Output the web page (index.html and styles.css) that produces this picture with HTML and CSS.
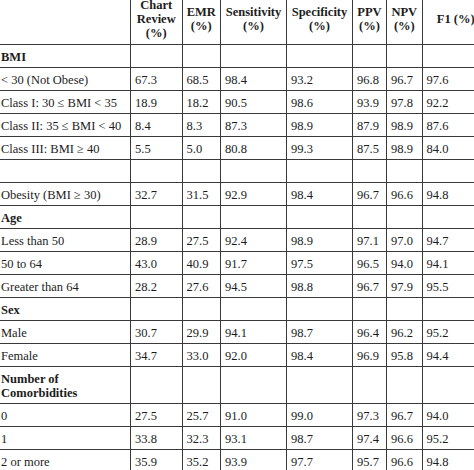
FILE: index.html
```html
<!DOCTYPE html>
<html lang="en">
<head>
<meta charset="utf-8">
<title>Table</title>
<link rel="stylesheet" href="styles.css">
</head>
<body>
<table class="tbl">
  <colgroup>
    <col class="c-label">
    <col class="c-chart">
    <col class="c-emr">
    <col class="c-sens">
    <col class="c-spec">
    <col class="c-ppv">
    <col class="c-npv">
    <col class="c-f1">
  </colgroup>
  <thead>
    <tr>
      <th></th>
      <th>Chart<br>Review<br>(%)</th>
      <th>EMR<br>(%)</th>
      <th>Sensitivity<br>(%)</th>
      <th>Specificity<br>(%)</th>
      <th>PPV<br>(%)</th>
      <th>NPV<br>(%)</th>
      <th>F1 (%)</th>
    </tr>
  </thead>
  <tbody>
    <tr class="group"><td>BMI</td><td></td><td></td><td></td><td></td><td></td><td></td><td></td></tr>
    <tr><td>&lt; 30 (Not Obese)</td><td>67.3</td><td>68.5</td><td>98.4</td><td>93.2</td><td>96.8</td><td>96.7</td><td>97.6</td></tr>
    <tr><td>Class I: 30 ≤ BMI &lt; 35</td><td>18.9</td><td>18.2</td><td>90.5</td><td>98.6</td><td>93.9</td><td>97.8</td><td>92.2</td></tr>
    <tr><td>Class II: 35 ≤ BMI &lt; 40</td><td>8.4</td><td>8.3</td><td>87.3</td><td>98.9</td><td>87.9</td><td>98.9</td><td>87.6</td></tr>
    <tr><td>Class III: BMI ≥ 40</td><td>5.5</td><td>5.0</td><td>80.8</td><td>99.3</td><td>87.5</td><td>98.9</td><td>84.0</td></tr>
    <tr><td></td><td></td><td></td><td></td><td></td><td></td><td></td><td></td></tr>
    <tr><td>Obesity (BMI ≥ 30)</td><td>32.7</td><td>31.5</td><td>92.9</td><td>98.4</td><td>96.7</td><td>96.6</td><td>94.8</td></tr>
    <tr class="group"><td>Age</td><td></td><td></td><td></td><td></td><td></td><td></td><td></td></tr>
    <tr><td>Less than 50</td><td>28.9</td><td>27.5</td><td>92.4</td><td>98.9</td><td>97.1</td><td>97.0</td><td>94.7</td></tr>
    <tr><td>50 to 64</td><td>43.0</td><td>40.9</td><td>91.7</td><td>97.5</td><td>96.5</td><td>94.0</td><td>94.1</td></tr>
    <tr><td>Greater than 64</td><td>28.2</td><td>27.6</td><td>94.5</td><td>98.8</td><td>96.7</td><td>97.9</td><td>95.5</td></tr>
    <tr class="group"><td>Sex</td><td></td><td></td><td></td><td></td><td></td><td></td><td></td></tr>
    <tr><td>Male</td><td>30.7</td><td>29.9</td><td>94.1</td><td>98.7</td><td>96.4</td><td>96.2</td><td>95.2</td></tr>
    <tr><td>Female</td><td>34.7</td><td>33.0</td><td>92.0</td><td>98.4</td><td>96.9</td><td>95.8</td><td>94.4</td></tr>
    <tr class="group"><td>Number of<br>Comorbidities</td><td></td><td></td><td></td><td></td><td></td><td></td><td></td></tr>
    <tr><td>0</td><td>27.5</td><td>25.7</td><td>91.0</td><td>99.0</td><td>97.3</td><td>96.7</td><td>94.0</td></tr>
    <tr><td>1</td><td>33.8</td><td>32.3</td><td>93.1</td><td>98.7</td><td>97.4</td><td>96.6</td><td>95.2</td></tr>
    <tr><td>2 or more</td><td>35.9</td><td>35.2</td><td>93.9</td><td>97.7</td><td>95.7</td><td>96.6</td><td>94.8</td></tr>
  </tbody>
</table>
</body>
</html>
```
FILE: styles.css
```css
html, body {
  margin: 0;
  padding: 0;
  overflow: hidden;
  background: #ffffff;
}

body {
  width: 474px;
  height: 470px;
  font-family: "Liberation Serif", "Times New Roman", serif;
  font-size: 12.5px;
  color: #1c1c1c;
}

.tbl {
  border-collapse: collapse;
  table-layout: fixed;
  width: 493px;
  margin-left: -4px;
  margin-top: -7px;
}

.c-label { width: 134px; }
.c-chart { width: 51.5px; }
.c-emr { width: 38.5px; }
.c-sens { width: 66px; }
.c-spec { width: 66px; }
.c-ppv { width: 34px; }
.c-npv { width: 35.6px; }
.c-f1 { width: 67.4px; }

.tbl tbody tr {
  height: 23px;
}

.tbl th,
.tbl td {
  border: 1px solid #3a3a3a;
  padding: 5px 4px 3px 4px;
  line-height: 14px;
  text-align: left;
  vertical-align: middle;
  white-space: nowrap;
  overflow: hidden;
}

.tbl th {
  font-weight: bold;
  text-align: center;
  padding: 4px 2px;
}

.group td:first-child {
  font-weight: bold;
}
```
